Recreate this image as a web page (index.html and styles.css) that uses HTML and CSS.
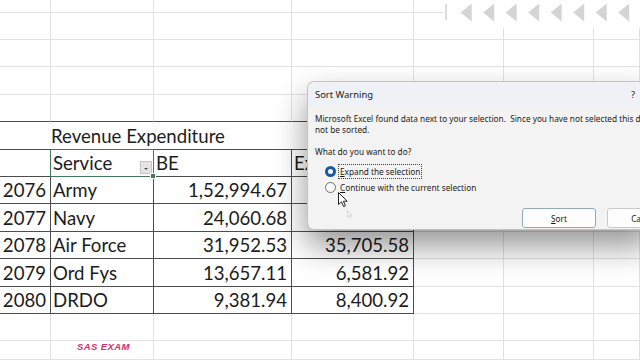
FILE: index.html
```html
<!DOCTYPE html>
<html>
<head>
<meta charset="utf-8">
<link rel="stylesheet" href="styles.css">
</head>
<body>
<div class="sheet">
  <div class="row h13"><div class="c"></div><div class="c"></div><div class="c"></div><div class="c"></div><div class="c"></div><div class="c"></div><div class="c"></div></div>
  <div class="row h27"><div class="c"></div><div class="c"></div><div class="c"></div><div class="c"></div><div class="c"></div><div class="c"></div><div class="c"></div></div>
  <div class="row h27"><div class="c"></div><div class="c"></div><div class="c"></div><div class="c"></div><div class="c"></div><div class="c"></div><div class="c"></div></div>
  <div class="row h28"><div class="c"></div><div class="c"></div><div class="c"></div><div class="c"></div><div class="c"></div><div class="c"></div><div class="c"></div></div>
  <div class="row h27"><div class="c db"></div><div class="c db"></div><div class="c db"></div><div class="c db"></div><div class="c"></div><div class="c"></div><div class="c"></div></div>
  <div class="row h28"><div class="c db nr"></div><div class="c db dr span3 title">Revenue Expenditure</div><div class="c"></div><div class="c"></div><div class="c"></div></div>
  <div class="row h27"><div class="c db dr"></div><div class="c db dr active">Service<span class="filter"></span></div><div class="c db dr">BE</div><div class="c db dr">Expenditure</div><div class="c"></div><div class="c"></div><div class="c"></div></div>
  <div class="row h27"><div class="c db dr num">2076</div><div class="c db dr">Army</div><div class="c db dr num">1,52,994.67</div><div class="c db dr num"></div><div class="c"></div><div class="c"></div><div class="c"></div></div>
  <div class="row h28"><div class="c db dr num">2077</div><div class="c db dr">Navy</div><div class="c db dr num">24,060.68</div><div class="c db dr num"></div><div class="c"></div><div class="c"></div><div class="c"></div></div>
  <div class="row h27"><div class="c db dr num">2078</div><div class="c db dr">Air Force</div><div class="c db dr num">31,952.53</div><div class="c db dr num">35,705.58</div><div class="c"></div><div class="c"></div><div class="c"></div></div>
  <div class="row h28"><div class="c db dr num">2079</div><div class="c db dr">Ord Fys</div><div class="c db dr num">13,657.11</div><div class="c db dr num">6,581.92</div><div class="c"></div><div class="c"></div><div class="c"></div></div>
  <div class="row h27"><div class="c db dr num">2080</div><div class="c db dr">DRDO</div><div class="c db dr num">9,381.94</div><div class="c db dr num">8,400.92</div><div class="c"></div><div class="c"></div><div class="c"></div></div>
  <div class="row h27"><div class="c"></div><div class="c"></div><div class="c"></div><div class="c"></div><div class="c"></div><div class="c"></div><div class="c"></div></div>
  <div class="row h19"><div class="c"></div><div class="c"></div><div class="c"></div><div class="c"></div><div class="c"></div><div class="c"></div><div class="c"></div></div>
</div>

<div class="arrows">
  <svg width="197" height="28" viewBox="0 0 197 28">
    <rect x="2" y="4" width="2" height="16" fill="#dcdcdc"/>
    <polygon points="17.7,12.5 28.7,3.5 28.7,21.5" fill="#d4d4d4"/>
    <polygon points="40.2,12.5 51.2,3.5 51.2,21.5" fill="#d4d4d4"/>
    <polygon points="62.7,12.5 73.7,3.5 73.7,21.5" fill="#d4d4d4"/>
    <polygon points="85.2,12.5 96.2,3.5 96.2,21.5" fill="#d4d4d4"/>
    <polygon points="107.7,12.5 118.7,3.5 118.7,21.5" fill="#d4d4d4"/>
    <polygon points="130.2,12.5 141.2,3.5 141.2,21.5" fill="#d4d4d4"/>
    <polygon points="152.7,12.5 163.7,3.5 163.7,21.5" fill="#d4d4d4"/>
    <polygon points="175.2,12.5 186.2,3.5 186.2,21.5" fill="#d4d4d4"/>
  </svg>
</div>

<div class="dialog">
  <div class="dlg-title"><span>Sort Warning</span><span>?</span></div>
  <div class="dlg-body">
    <p class="msg">Microsoft Excel found data next to your selection.&nbsp; Since you have not selected this data, it will<br>not be sorted.</p>
    <p class="ask">What do you want to do?</p>
    <div class="opts">
      <div class="opt"><span class="radio on"></span><span class="focus"><u>E</u>xpand the selection</span></div>
      <div class="opt"><span class="radio"></span><span class="lbl"><u>C</u>ontinue with the current selection</span></div>
    </div>
    <div class="btns">
      <button class="btn primary"><u>S</u>ort</button>
      <button class="btn">Cancel</button>
    </div>
  </div>
</div>

<svg class="cursor" width="11" height="16" viewBox="0 0 11 16">
  <path d="M0.5,0.5 L0.5,12.5 L3.5,9.8 L5.6,14.6 L7.4,13.8 L5.4,9.2 L9.2,9.2 Z" fill="#fff" stroke="#222" stroke-width="1" stroke-linejoin="round"/>
</svg>
<svg class="ghost" width="6" height="9" viewBox="0 0 6 9">
  <path d="M0.5,0.5 L0.5,7 L2,5.5 L3,8 L4,7.6 L3,5 L5,5 Z" fill="#f4f4f4" stroke="#d0d0d0" stroke-width="0.8"/>
</svg>

<div class="brand">SAS EXAM</div>
</body>
</html>
```

FILE: styles.css
```css
html, body { margin: 0; padding: 0; }
body {
  width: 640px; height: 360px; overflow: hidden; position: relative;
  background: #fff; color: #1c1c1c;
  font-family: Lato, "Open Sans", sans-serif;
}
.sheet { display: flex; flex-direction: column; }
.row { display: grid; grid-template-columns: 51px 103px 138px 122px 90px 90px 46px; }
.h13 { height: 13px; } .h27 { height: 27px; } .h28 { height: 28px; } .h19 { height: 19px; }
.c {
  box-sizing: border-box;
  border-right: 1px solid #e2e2e2; border-bottom: 1px solid #e2e2e2;
  display: flex; align-items: flex-end;
  padding: 0 2px 4px 2px;
  font-size: 18.6px; line-height: 18px;
  white-space: nowrap; overflow: hidden;
}
.span3 { grid-column: span 3; }
.title { padding-left: 0; }
.num { justify-content: flex-end; padding-right: 4px; }
.db { border-bottom-color: #4d4d4d; }
.dr { border-right-color: #4d4d4d; }
.nr { border-right-color: transparent; }
.active { position: relative; overflow: visible; }
.active::after {
  content: ""; position: absolute; left: -1px; top: -1px; right: -1px; bottom: -1px;
  border: 1px solid #3f7b5b;
}
.active::before {
  content: ""; position: absolute; right: -3px; bottom: -3px; width: 4px; height: 4px;
  background: #3f7b5b; border: 1px solid #fff; z-index: 2;
}
.filter {
  position: absolute; right: 1px; bottom: 2px; width: 12px; height: 13px;
  box-sizing: border-box; background: #e4e4e4; border: 1px solid #c4c4c4;
}
.filter::after {
  content: ""; position: absolute; left: 3px; top: 6px;
  border-left: 2px solid transparent; border-right: 2px solid transparent; border-top: 2px solid #555;
}

.arrows { position: absolute; left: 443px; top: 0; width: 197px; height: 28px; background: #fff; }
.arrows svg { display: block; }

.dialog {
  position: absolute; left: 307px; top: 81px; width: 345px; height: 149px;
  box-sizing: border-box;
  border: 1px solid #c3c3c3; border-right: none; border-radius: 7px 0 0 7px;
  background: #f3f3f3;
  box-shadow: 0 16px 32px rgba(0,0,0,0.42);
  font-family: "Noto Sans", "Open Sans", sans-serif; color: #1b1b1b;
  overflow: hidden;
}
.dlg-title {
  height: 24px; background: #eef1f6;
  display: flex; justify-content: space-between; align-items: center;
  padding: 0 17px 0 7px; font-size: 9.4px;
}
.dlg-body { padding: 7px 0 0 7px; font-size: 8.25px; line-height: 11px; }
.msg { margin: 0; white-space: nowrap; }
.ask { margin: 11px 0 0; }
.opts { margin-top: 6px; display: flex; flex-direction: column; }
.opt { height: 16px; display: flex; align-items: center; padding-left: 10px; }
.radio {
  width: 11px; height: 11px; box-sizing: border-box; border-radius: 50%;
  border: 1px solid #6e6e6e; background: #f9f9f9; margin-right: 3px; flex: none;
}
.radio.on { border: 3.5px solid #1758a8; background: #fff; }
.focus { outline: 1px dotted #444; padding: 1px 1px; }
.lbl { padding: 0 1px; }
.btns { margin: 13px 0 0 207px; display: flex; gap: 11px; }
.btn {
  width: 74px; height: 20px; box-sizing: border-box; flex: none;
  border: 1px solid #c9c9c9; border-radius: 3px; background: #fdfdfd;
  font-family: "Noto Sans", sans-serif; font-size: 8.25px; color: #1b1b1b; padding: 0;
}
.btn.primary { border-color: #91a9ba; }

.cursor { position: absolute; left: 338px; top: 192px; }
.ghost { position: absolute; left: 347px; top: 210px; }
.brand {
  position: absolute; left: 77px; top: 341px;
  font-family: "Liberation Sans", sans-serif; font-weight: bold; font-style: italic;
  font-size: 9.5px; color: #d6306e; letter-spacing: 0.4px;
}
```
